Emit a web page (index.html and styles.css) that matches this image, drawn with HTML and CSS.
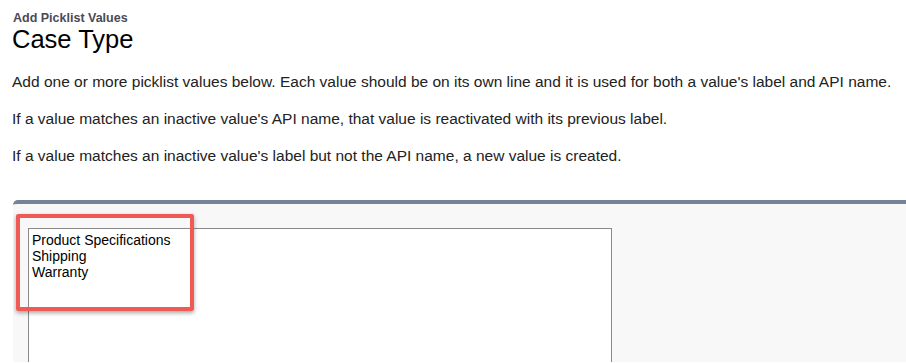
FILE: index.html
```html
<!DOCTYPE html>
<html lang="en">
  <head>
    <meta charset="UTF-8" />
    <title>Add Picklist Values</title>
    <link rel="stylesheet" href="styles.css">
  </head>
  <body>
    <div class="header">
      <div class="subtitle">Add Picklist Values</div>
      <h1>Case Type</h1>
    </div>
    <p>Add one or more picklist values below. Each value should be on its own line and it is used for both a value's label and API name.</p>
    <p>If a value matches an inactive value's API name, that value is reactivated with its previous label.</p>
    <p>If a value matches an inactive value's label but not the API name, a new value is created.</p>

    <div class="panel">
      <div class="field">
        <textarea id="valores">Product Specifications
Shipping
Warranty</textarea>
        <div class="highlight"></div>
      </div>
    </div>
  </body>
</html>
```

FILE: styles.css
```css
body {
  font-family: "Liberation Sans", Arial, sans-serif;
  margin: 0;
  padding: 11px 0 0 12px;
  background-color: #fff;
  color: #1a1a1a;
  overflow: hidden;
}
.header {
  margin-bottom: 19px;
}
.subtitle {
  font-size: 12.5px;
  font-weight: bold;
  color: #4a4a56;
  padding-left: 1px;
  line-height: 14px;
}
h1 {
  font-size: 25.5px;
  font-weight: normal;
  color: #000;
  margin: 0;
  line-height: 29px;
}
p {
  font-size: 15.5px;
  margin: 0 0 20px;
  line-height: 17px;
  color: #222;
}
.panel {
  margin-top: 36px;
  margin-left: 1px;
  border-top: 4px solid #748398;
  border-top-left-radius: 5px;
  background-color: #f8f8f8;
  padding: 24px 0 0 15px;
  height: 134px;
  overflow: hidden;
}
.field {
  position: relative;
  width: 584px;
}
textarea {
  display: block;
  width: 584px;
  height: 160px;
  box-sizing: border-box;
  border: 1px solid #8a8a8a;
  background: #fff;
  font-family: "Liberation Sans", Arial, sans-serif;
  font-size: 14px;
  line-height: 16px;
  padding: 3px 3px;
  resize: none;
  color: #000;
}
.highlight {
  position: absolute;
  left: -12px;
  top: -14px;
  width: 170px;
  height: 89px;
  border: 4px solid #ef5a55;
  border-radius: 2px;
  box-shadow: 0 2px 4px rgba(0, 0, 0, 0.35);
}
```
